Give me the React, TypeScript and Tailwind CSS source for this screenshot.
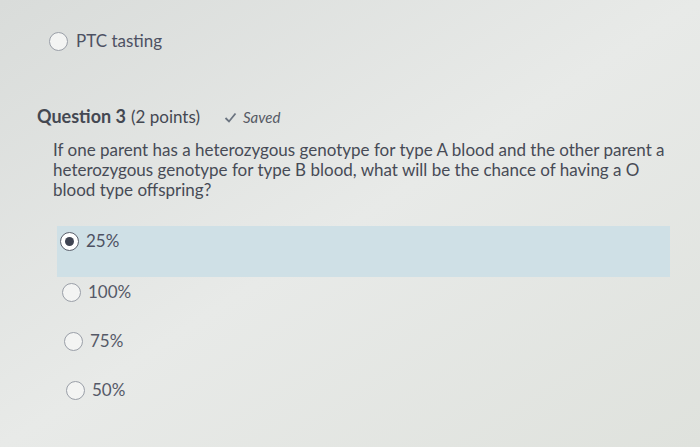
import React from 'react';

const options = [
  { label: '100%', indent: 'ml-[62px]', gap: 'mt-0' },
  { label: '75%', indent: 'ml-[64px]', gap: 'mt-[19px]' },
  { label: '50%', indent: 'ml-[66px]', gap: 'mt-[19px]' },
];

function Radio({ selected }: { selected?: boolean }) {
  return (
    <span
      className={
        'flex h-[19px] w-[19px] shrink-0 items-center justify-center rounded-full border-[1.5px] ' +
        (selected ? 'border-[#5b606c] bg-white' : 'border-[#9a9fa8] bg-[#f3f4f3]')
      }
    >
      {selected && <span className="h-[9px] w-[9px] rounded-full bg-[#3f4452]" />}
    </span>
  );
}

export default function App() {
  return (
    <div
      className="h-[447px] w-[700px] overflow-hidden bg-gradient-to-br from-[#d9dcda] via-[#e8eae8] to-[#dfe2dd] text-[#4a4e5a]"
      style={{ fontFamily: 'Lato, "Open Sans", sans-serif' }}
    >
      {/* previous question, last option */}
      <div className="ml-[49px] flex items-center gap-[8px] pt-[31px]">
        <Radio />
        <span className="text-[17px] leading-[20px] text-[#4d5163]">PTC tasting</span>
      </div>

      {/* question header */}
      <div className="ml-[37px] mt-[52px] flex items-baseline">
        <span className="text-[18px] font-bold text-[#444852]">Question 3</span>
        <span className="ml-[5px] text-[17px] text-[#444852]">(2 points)</span>
        <span className="ml-[24px] flex items-baseline gap-[6px] text-[15px] italic text-[#555964]">
          <svg width="13" height="11" viewBox="0 0 13 11" className="self-center">
            <path d="M1.5 6 L5 9.5 L11.5 1.5" fill="none" stroke="#6b7480" strokeWidth="1.8" />
          </svg>
          Saved
        </span>
      </div>

      <p className="ml-[53px] mt-[10px] w-[625px] text-[17px] leading-[20px] text-[#474b56]">
        If one parent has a heterozygous genotype for type A blood and the other parent a heterozygous genotype
        for type B blood, what will be the chance of having a O blood type offspring?
      </p>

      <div className="mt-[26px] flex flex-col">
        <div className="ml-[57px] mr-[30px] h-[51px] bg-[#cfe0e6]">
          <div className="flex h-[30px] items-center gap-[7px] pl-[3px]">
            <Radio selected />
            <span className="text-[17px] text-[#4d5162]">25%</span>
          </div>
        </div>
        {options.map((o) => (
          <div key={o.label} className={'flex h-[30px] items-center gap-[7px] ' + o.indent + ' ' + o.gap}>
            <Radio />
            <span className="text-[17px] text-[#555967]">{o.label}</span>
          </div>
        ))}
      </div>
    </div>
  );
}
